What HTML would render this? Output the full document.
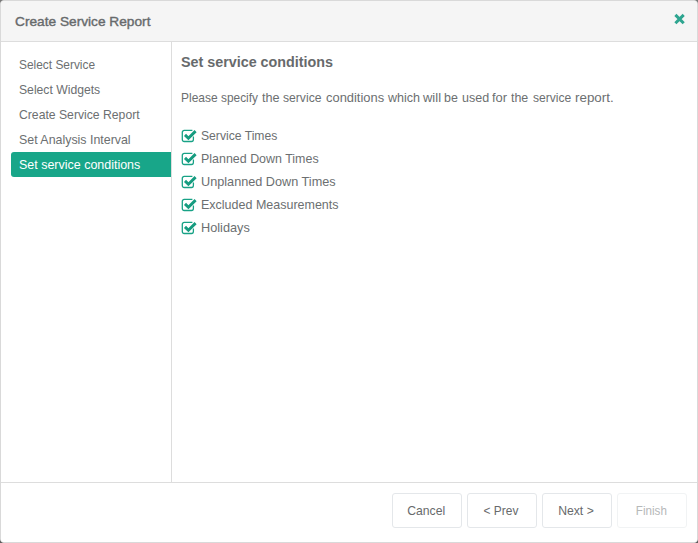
<!DOCTYPE html>
<html>
<head>
<meta charset="utf-8">
<title>Create Service Report</title>
<style>
html,body{margin:0;padding:0;}
body{width:698px;height:543px;overflow:hidden;background:linear-gradient(#787878,#5c5c5c);font-family:"Liberation Sans",sans-serif;font-size:13px;color:#6c6f71;}
.t{display:inline-block;white-space:nowrap;}
.dlg{position:absolute;left:0;top:0;width:696px;height:541px;border:1px solid #d9d9d9;border-radius:4px;background:#fff;overflow:hidden;}
.hdr{position:absolute;left:0;top:0;right:0;height:40px;background:#f5f5f5;border-bottom:1px solid #dddddd;}
.title{position:absolute;left:14px;top:13px;font-size:13px;font-weight:normal;-webkit-text-stroke:0.38px #676a6c;color:#676a6c;white-space:nowrap;}
.close{position:absolute;left:672px;top:12px;width:13px;height:13px;}
.side{position:absolute;left:0;top:41px;width:170px;height:440px;border-right:1px solid #dddddd;}
.side div{position:absolute;left:10px;width:160px;height:25px;line-height:25px;box-sizing:border-box;padding-left:8px;white-space:nowrap;border-radius:3px 0 0 3px;}
.side div.sel{background:#18a689;color:#fff;}
.main{position:absolute;left:171px;top:41px;right:0;height:440px;}
h2{position:absolute;margin:0;left:9px;top:12px;font-size:14px;font-weight:bold;color:#676a6c;white-space:nowrap;}
p{position:absolute;margin:0;left:9px;top:48px;width:500px;height:15px;line-height:15px;white-space:nowrap;}
.w{position:absolute;top:0;display:inline-block;white-space:nowrap;transform-origin:0 50%;}
.cb{position:absolute;left:9px;height:23px;line-height:23px;white-space:nowrap;}
.cb svg{position:absolute;left:0;top:4px;}
.cb .t{position:absolute;left:20px;top:0;}
.ftr{position:absolute;left:0;top:481px;right:0;height:60px;border-top:1px solid #dddddd;background:#fff;}
.btn{position:absolute;top:10px;width:70px;height:35px;box-sizing:border-box;border:1px solid #e4e7ea;border-radius:3px;background:#fff;text-align:center;line-height:33px;padding-right:2px;font-size:13px;color:#676a6c;}
.btn.dis{color:#b6b8b9;border-color:#f1f3f4;}
</style>
</head>
<body>
<div class="dlg">
  <div class="hdr">
    <div class="title"><span class="t" id="title" style="transform:scaleX(1.0532);transform-origin:0 50%">Create Service Report</span></div>
    <svg class="close" viewBox="0 0 13 13"><path d="M2.4 1.9 L10.7 10.2 M10.7 1.9 L2.4 10.2" stroke="#2ea590" stroke-width="3" stroke-linecap="butt" fill="none"/></svg>
  </div>
  <div class="side">
    <div style="top:10px"><span class="t" id="side1" style="transform:scaleX(0.9153);transform-origin:0 50%">Select Service</span></div>
    <div style="top:35px"><span class="t" id="side2" style="transform:scaleX(0.9364);transform-origin:0 50%">Select Widgets</span></div>
    <div style="top:60px"><span class="t" id="side3" style="transform:scaleX(0.9380);transform-origin:0 50%">Create Service Report</span></div>
    <div style="top:85px"><span class="t" id="side4" style="transform:scaleX(0.9536);transform-origin:0 50%">Set Analysis Interval</span></div>
    <div class="sel" style="top:110px"><span class="t" id="side5" style="transform:scaleX(0.9592);transform-origin:0 50%">Set service conditions</span></div>
  </div>
  <div class="main">
    <h2><span class="t" id="h2" style="transform:scaleX(1.0230);transform-origin:0 50%">Set service conditions</span></h2>
    <p><span class="w" style="left:-0.14px;transform:scaleX(0.9211)">Please</span> <span class="w" style="left:39.86px;transform:scaleX(0.9125)">specify</span> <span class="w" style="left:81.26px;transform:scaleX(0.9739)">the</span> <span class="w" style="left:102.45px;transform:scaleX(0.9342)">service</span> <span class="w" style="left:144.70px;transform:scaleX(0.9930)">conditions</span> <span class="w" style="left:206.50px;transform:scaleX(0.9637)">which</span> <span class="w" style="left:242.20px;transform:scaleX(0.9985)">will</span> <span class="w" style="left:263.27px;transform:scaleX(0.9538)">be</span> <span class="w" style="left:280.56px;transform:scaleX(0.9623)">used</span> <span class="w" style="left:311.28px;transform:scaleX(0.9950)">for</span> <span class="w" style="left:330.26px;transform:scaleX(0.9565)">the</span> <span class="w" style="left:351.65px;transform:scaleX(0.9292)">service</span> <span class="w" style="left:393.60px;transform:scaleX(1.0282)">report.</span></p>
    <div class="cb" style="top:82px"><svg width="17" height="15" viewBox="0 0 17 15"><path d="M11.4 2.4 H3.2 A1.9 1.9 0 0 0 1.3 4.3 V11.6 A1.9 1.9 0 0 0 3.2 13.5 H10.5 A1.9 1.9 0 0 0 12.4 11.6 V8.4" fill="none" stroke="#18a286" stroke-width="1.3"/><path d="M4.0 6.9 L7.4 10.3 L14.6 3.1" fill="none" stroke="#169c80" stroke-width="2.9"/></svg><span class="t" id="cb1" style="transform:scaleX(0.9351);transform-origin:0 50%">Service Times</span></div>
    <div class="cb" style="top:105px"><svg width="17" height="15" viewBox="0 0 17 15"><path d="M11.4 2.4 H3.2 A1.9 1.9 0 0 0 1.3 4.3 V11.6 A1.9 1.9 0 0 0 3.2 13.5 H10.5 A1.9 1.9 0 0 0 12.4 11.6 V8.4" fill="none" stroke="#18a286" stroke-width="1.3"/><path d="M4.0 6.9 L7.4 10.3 L14.6 3.1" fill="none" stroke="#169c80" stroke-width="2.9"/></svg><span class="t" id="cb2" style="transform:scaleX(0.9574);transform-origin:0 50%">Planned Down Times</span></div>
    <div class="cb" style="top:128px"><svg width="17" height="15" viewBox="0 0 17 15"><path d="M11.4 2.4 H3.2 A1.9 1.9 0 0 0 1.3 4.3 V11.6 A1.9 1.9 0 0 0 3.2 13.5 H10.5 A1.9 1.9 0 0 0 12.4 11.6 V8.4" fill="none" stroke="#18a286" stroke-width="1.3"/><path d="M4.0 6.9 L7.4 10.3 L14.6 3.1" fill="none" stroke="#169c80" stroke-width="2.9"/></svg><span class="t" id="cb3" style="transform:scaleX(0.9755);transform-origin:0 50%">Unplanned Down Times</span></div>
    <div class="cb" style="top:151px"><svg width="17" height="15" viewBox="0 0 17 15"><path d="M11.4 2.4 H3.2 A1.9 1.9 0 0 0 1.3 4.3 V11.6 A1.9 1.9 0 0 0 3.2 13.5 H10.5 A1.9 1.9 0 0 0 12.4 11.6 V8.4" fill="none" stroke="#18a286" stroke-width="1.3"/><path d="M4.0 6.9 L7.4 10.3 L14.6 3.1" fill="none" stroke="#169c80" stroke-width="2.9"/></svg><span class="t" id="cb4" style="transform:scaleX(0.9613);transform-origin:0 50%">Excluded Measurements</span></div>
    <div class="cb" style="top:174px"><svg width="17" height="15" viewBox="0 0 17 15"><path d="M11.4 2.4 H3.2 A1.9 1.9 0 0 0 1.3 4.3 V11.6 A1.9 1.9 0 0 0 3.2 13.5 H10.5 A1.9 1.9 0 0 0 12.4 11.6 V8.4" fill="none" stroke="#18a286" stroke-width="1.3"/><path d="M4.0 6.9 L7.4 10.3 L14.6 3.1" fill="none" stroke="#169c80" stroke-width="2.9"/></svg><span class="t" id="cb5" style="transform:scaleX(0.9792);transform-origin:0 50%">Holidays</span></div>
  </div>
  <div class="ftr">
    <div class="btn" style="left:391px"><span class="t" id="b1" style="transform:scaleX(0.9373);transform-origin:50% 50%">Cancel</span></div>
    <div class="btn" style="left:466px"><span class="t" id="b2" style="transform:scaleX(0.9182);transform-origin:50% 50%">&lt; Prev</span></div>
    <div class="btn" style="left:541px"><span class="t" id="b3" style="transform:scaleX(0.9381);transform-origin:50% 50%">Next &gt;</span></div>
    <div class="btn dis" style="left:616px"><span class="t" id="b4" style="transform:scaleX(0.8947);transform-origin:50% 50%">Finish</span></div>
  </div>
</div>
</body>
</html>
